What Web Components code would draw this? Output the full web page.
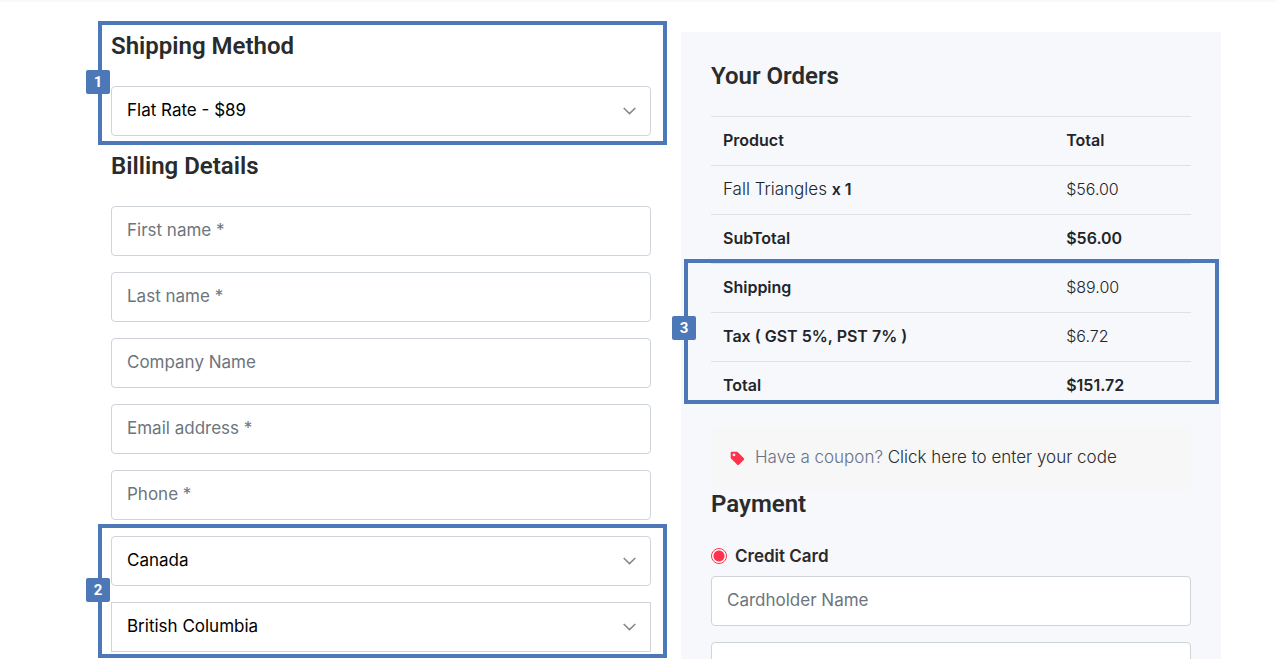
<!DOCTYPE html>
<html lang="en">
<head>
<meta charset="utf-8">
<meta name="viewport" content="width=device-width, initial-scale=1">
<title>Checkout</title>
<style>
  body { margin: 0; background: #fff; color: #212529; font: 400 17px/24px Inter, "Open Sans", sans-serif; }
</style>
</head>
<body>
<checkout-page></checkout-page>
<script>
const define = (name, html, setup) => customElements.define(name, class extends HTMLElement {
  constructor() {
    super();
    const t = document.createElement('template');
    t.innerHTML = html;
    this.attachShadow({ mode: 'open' }).append(t.content.cloneNode(true));
  }
  connectedCallback() { if (setup) setup(this, this.shadowRoot); }
});

define('section-title', `
  <style>
    :host { display: block; margin-bottom: 26px; }
    h2 { margin: 0; font: 600 24px/28px Roboto, sans-serif; color: #292b2c; }
  </style>
  <h2><slot></slot></h2>`);

define('text-field', `
  <style>
    :host { display: block; }
    input { display: block; box-sizing: border-box; width: 100%; height: 50px; padding: 0 15px 2px;
      border: 1px solid #ced4da; border-radius: 4px; background: #fff; color: #000; font: inherit; outline: 0; }
    input::placeholder { color: #6c757d; opacity: 1; }
  </style>
  <input type="text">`, (host, root) => {
  const input = root.querySelector('input');
  input.placeholder = host.getAttribute('placeholder') || '';
  input.setAttribute('aria-label', input.placeholder || host.getAttribute('label'));
  if (host.hasAttribute('type')) input.type = host.getAttribute('type');
});

define('select-field', `
  <style>
    :host { display: grid; align-items: center; }
    select, svg { grid-area: 1 / 1; }
    select { appearance: none; box-sizing: border-box; width: 100%; height: 50px; padding: 0 40px 2px 15px;
      border: 1px solid #ced4da; border-radius: 4px; background: #fff; color: #000; font: inherit; outline: 0; }
    :host([square]) select { border-radius: 0; }
    svg { justify-self: end; margin-right: 15px; pointer-events: none; }
  </style>
  <select><option></option></select>
  <svg width="13" height="8" viewBox="0 0 13 8" fill="none" stroke="#868686" stroke-width="1.5" aria-hidden="true"><path d="M.7 1l5.8 5.6L12.300 1"/></svg>`,
(host, root) => {
  root.querySelector('option').textContent = host.getAttribute('value');
  root.querySelector('select').setAttribute('aria-label', host.getAttribute('label'));
});

define('call-out', `
  <style>
    :host { position: absolute; inset: var(--inset); border: 4px solid #4d78b8; pointer-events: none; }
    span { position: absolute; left: -16px; top: var(--badge-top); width: 24px; height: 24px; border-radius: 2px;
      background: #4d78b8; color: #fff; text-align: center; font: 700 15px/24px Roboto, sans-serif; }
  </style>
  <span><slot></slot></span>`);

define('order-table', `
  <style>
    :host { display: block; position: relative; margin-bottom: 16px; }
    table { width: 100%; border-collapse: separate; border-spacing: 0; table-layout: fixed; font-size: 16px; }
    col:first-child { width: 71.5%; }
    th, td { padding: 11px 12px 13px; border-top: 1px solid #dee2e6; text-align: left; font-weight: 300; }
    th, b { font-weight: 600; }
    th.item { font-weight: 300; font-size: 17px; }
    .item b { font-size: 16px; }
    call-out { --inset: 143px -28px 6px -27px; --badge-top: 53px; }
  </style>
  <table>
    <colgroup><col><col></colgroup>
    <thead><tr><th scope="col">Product</th><th scope="col">Total</th></tr></thead>
    <tbody>
      <tr><th scope="row" class="item">Fall Triangles <b>x 1</b></th><td>$56.00</td></tr>
      <tr><th scope="row">SubTotal</th><td><b>$56.00</b></td></tr>
      <tr><th scope="row">Shipping</th><td>$89.00</td></tr>
      <tr><th scope="row">Tax ( GST 5%, PST 7% )</th><td>$6.72</td></tr>
      <tr><th scope="row">Total</th><td><b>$151.72</b></td></tr>
    </tbody>
  </table>
  <call-out>3</call-out>`);

define('coupon-bar', `
  <style>
    :host { display: flex; align-items: center; gap: 10px; height: 64px; padding: 0 19px; background: #f7f7f7; color: #687188; font-weight: 300; white-space: nowrap; }
    a { color: #292b2c; text-decoration: none; }
    span { padding-bottom: 2px; }
  </style>
  <svg width="15" height="15" viewBox="0 0 15 15" aria-hidden="true"><path fill="#ff324d" fill-rule="evenodd" d="M1.500.7h5.200q.7 0 1.200.5l6 6q.7.800 0 1.600l-5 5q-.800.7-1.600 0l-6-6Q.7 7.300.7 6.600V1.500Q.7.7 1.500.7zM4 2.500a1.400 1.400 0 1 0 .010 0z"/></svg>
  <span>Have a coupon? <a href="#coupon">Click here to enter your code</a></span>`);

define('payment-option', `
  <style>
    :host { display: block; margin-bottom: 8px; }
    label { display: flex; align-items: center; gap: 8px; color: #292b2c; font-weight: 600; }
    input { appearance: none; box-sizing: border-box; width: 16px; height: 16px; margin: 0; border: 1px solid #ff324d;
      border-radius: 50%; background: radial-gradient(circle, #ff324d 5px, #fff 6px); }
  </style>
  <label><input type="radio" name="payment" checked><slot></slot></label>`);

define('checkout-page', `
  <style>
    :host { display: block; box-sizing: border-box; height: 100vh; overflow-y: auto; scrollbar-width: none; border-top: 2px solid #f9f9f9; }
    main { display: grid; grid-template-columns: minmax(0, 1fr) minmax(0, 1fr); gap: 30px; padding: 30px 55px 30px 111px; }
    form, .fields, .region { display: flex; flex-direction: column; gap: 16px; }
    .shipping, .region { position: relative; }
    .shipping call-out { --inset: -11px -16px -9px -13px; --badge-top: 45px; }
    .region call-out { --inset: -12px -16px -6px -13px; --badge-top: 50px; }
    aside { padding: 30px; background: #f7f8fb; }
  </style>
  <main>
    <form>
      <section class="shipping">
        <section-title>Shipping Method</section-title>
        <select-field label="Shipping method" value="Flat Rate - $89"></select-field>
        <call-out>1</call-out>
      </section>
      <section>
        <section-title>Billing Details</section-title>
        <div class="fields">
          <text-field placeholder="First name *"></text-field>
          <text-field placeholder="Last name *"></text-field>
          <text-field placeholder="Company Name"></text-field>
          <text-field placeholder="Email address *" type="email"></text-field>
          <text-field placeholder="Phone *" type="tel"></text-field>
          <div class="region">
            <select-field label="Country" value="Canada"></select-field>
            <select-field label="Province" value="British Columbia" square></select-field>
            <call-out>2</call-out>
          </div>
        </div>
      </section>
    </form>
    <aside>
      <section-title>Your Orders</section-title>
      <order-table></order-table>
      <coupon-bar></coupon-bar>
      <section-title>Payment</section-title>
      <payment-option>Credit Card</payment-option>
      <div class="fields">
        <text-field placeholder="Cardholder Name"></text-field>
        <text-field label="Card number"></text-field>
      </div>
    </aside>
  </main>`);
</script>
</body>
</html>
